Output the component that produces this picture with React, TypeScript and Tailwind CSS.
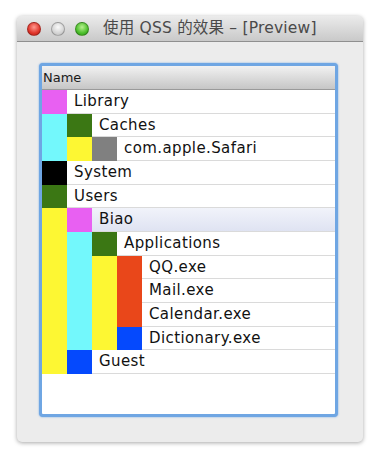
import React from "react";

type Row = { label: string; cols: string[]; selected?: boolean };

const MAGENTA = "bg-[#e860f2]";
const CYAN = "bg-[#73f8fc]";
const GREEN = "bg-[#3b7714]";
const YELLOW = "bg-[#fdf733]";
const GRAY = "bg-[#808080]";
const BLACK = "bg-black";
const RED = "bg-[#e9471a]";
const BLUE = "bg-[#0549fd]";

const rows: Row[] = [
  { label: "Library", cols: [MAGENTA] },
  { label: "Caches", cols: [CYAN, GREEN] },
  { label: "com.apple.Safari", cols: [CYAN, YELLOW, GRAY] },
  { label: "System", cols: [BLACK] },
  { label: "Users", cols: [GREEN] },
  { label: "Biao", cols: [YELLOW, MAGENTA], selected: true },
  { label: "Applications", cols: [YELLOW, CYAN, GREEN] },
  { label: "QQ.exe", cols: [YELLOW, CYAN, YELLOW, RED] },
  { label: "Mail.exe", cols: [YELLOW, CYAN, YELLOW, RED] },
  { label: "Calendar.exe", cols: [YELLOW, CYAN, YELLOW, RED] },
  { label: "Dictionary.exe", cols: [YELLOW, CYAN, YELLOW, BLUE] },
  { label: "Guest", cols: [YELLOW, BLUE] },
];

function TrafficLight({ color }: { color: string }) {
  return <div className={`w-[14px] h-[14px] rounded-full border border-black/25 ${color}`} />;
}

export default function App() {
  return (
    <div className="w-[381px] h-[460px] bg-white pt-[16px] pl-[17px] font-['DejaVu_Sans','Noto_Sans_CJK_SC',sans-serif]">
      <div className="w-[346px] h-[426px] rounded-[5px] bg-[#ececec] shadow-[0_1px_4px_rgba(0,0,0,0.35)] flex flex-col overflow-hidden">
        {/* Title bar */}
        <div className="h-[26px] shrink-0 flex items-center pl-[10px] bg-gradient-to-b from-[#ebebeb] to-[#c9c9c9] border-b border-[#8f8f8f]">
          <div className="flex items-center gap-[10px]">
            <TrafficLight color="bg-[radial-gradient(circle_at_50%_35%,#ff9a90,#e0352b_60%,#b81e16)]" />
            <TrafficLight color="bg-[radial-gradient(circle_at_50%_35%,#fafafa,#d4d4d4_60%,#bcbcbc)]" />
            <TrafficLight color="bg-[radial-gradient(circle_at_50%_35%,#b8f090,#4cbf2c_60%,#2e9418)]" />
          </div>
          <span className="ml-[14px] text-[15.5px] tracking-[0.2px] text-[#4a4a4a] leading-none">
            使用 QSS 的效果 – [Preview]
          </span>
        </div>

        {/* Body */}
        <div className="flex-1 pl-[22px] pt-[21px]">
          <div className="w-[299px] h-[354px] rounded-[4px] border-[3px] border-[#6fa6e3] shadow-[0_0_2px_#6fa6e3] bg-white flex flex-col overflow-hidden">
            <div className="h-[24px] shrink-0 flex items-center pl-[1px] text-[13px] text-[#1a1a1a] bg-gradient-to-b from-[#f2f2f2] to-[#c6c6c6] border-b border-[#9a9a9a]">
              Name
            </div>
            {rows.map((r) => (
              <div key={r.label} className="h-[23.67px] flex">
                {r.cols.map((c, i) => (
                  <div key={i} className={`w-[25px] shrink-0 ${c}`} />
                ))}
                <div
                  className={`flex-1 flex items-center pl-[7px] text-[15px] tracking-[0.4px] text-[#111] border-b border-[#dadada] ${
                    r.selected ? "bg-gradient-to-b from-[#f1f3fa] to-[#dfe3f2]" : "bg-white"
                  }`}
                >
                  {r.label}
                </div>
              </div>
            ))}
          </div>
        </div>
      </div>
    </div>
  );
}
